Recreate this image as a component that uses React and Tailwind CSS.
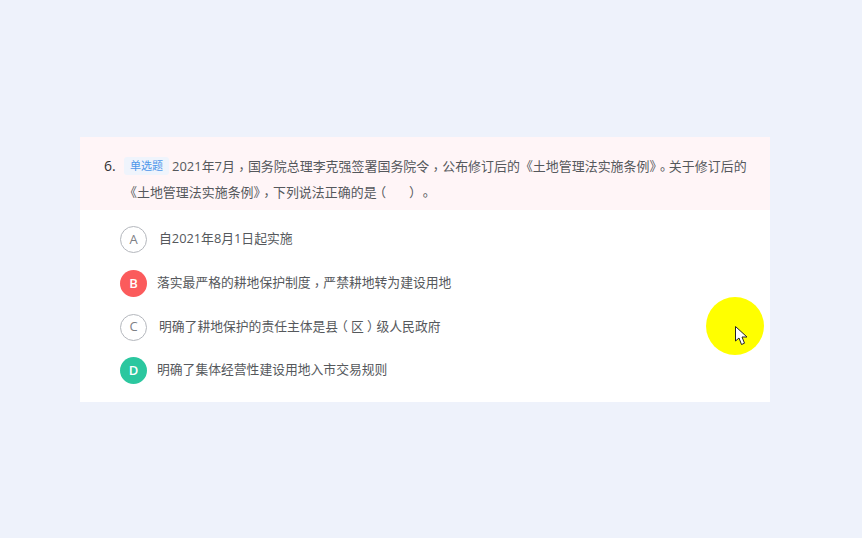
import React from "react";

const options = [
  { letter: "A", text: "自2021年8月1日起实施", state: "idle" },
  { letter: "B", text: "落实最严格的耕地保护制度，严禁耕地转为建设用地", state: "wrong" },
  { letter: "C", text: "明确了耕地保护的责任主体是县（区）级人民政府", state: "idle" },
  { letter: "D", text: "明确了集体经营性建设用地入市交易规则", state: "right" },
];

// punctuation in the screenshot sits centred in its cell, unlike the SC glyphs
const Text = ({ children }) =>
  [...children].map((ch, i) => {
    if (ch === "，" || ch === "。")
      return (
        <span key={i} className="leading-none align-[-3px] font-['Noto_Sans_CJK_TC']">
          {ch}
        </span>
      );
    if (ch === "（" || ch === "）")
      return (
        <span key={i} className="px-[0.25em] [font-feature-settings:'halt']">
          {ch}
        </span>
      );
    return ch;
  });

const Option = ({ letter, text, state }) => {
  const circle =
    state === "wrong"
      ? "bg-[#fb5b5c] text-white font-semibold"
      : state === "right"
      ? "bg-[#2bc79f] text-white font-semibold"
      : "border border-[#b4b7bd] text-[#7d8085] bg-white";

  return (
    <div className="flex items-center h-[43.67px]">
      <div
        className={`w-[27px] h-[27px] rounded-full flex items-center justify-center text-[13px] shrink-0 ${circle}`}
      >
        {letter}
      </div>
      <span className={`text-[12.8px] text-[#55585c] pb-[2px] ${state === "idle" ? "ml-[12px]" : "ml-[10px]"}`}>
        <Text>{text}</Text>
      </span>
    </div>
  );
};

export default function App() {
  return (
    <div
      className="relative h-screen overflow-hidden bg-[#eef2fb] pt-[137px] pl-[80px]"
      style={{ fontFamily: '"Open Sans", "Noto Sans CJK SC", sans-serif' }}
    >
      <div className="w-[690px] bg-white">
        {/* Question */}
        <div className="h-[73px] bg-[#fff5f7] pt-[16px] pl-[24px] pr-[10px] flex">
          <span className="w-[20px] shrink-0 text-[14px] leading-[26px] text-[#333]">6.</span>
          <p className="text-[12.95px] leading-[26px] text-[#55585c]">
            <span className="inline-block h-[18px] leading-[18px] px-[6px] mr-[3px] rounded-[3px] bg-[#eff4fc] text-[#4d96ea] text-[11px] align-[1px]">
              单选题
            </span>
            <Text>2021年7月，国务院总理李克强签署国务院令，公布修订后的《土地管理法实施条例》。关于修订后的</Text>
            <br />
            <Text>《土地管理法实施条例》，下列说法正确的是（　 ）。</Text>
          </p>
        </div>

        {/* Options */}
        <div className="pl-[40px] pt-[8px] pb-[9px]">
          {options.map((o) => (
            <Option key={o.letter} {...o} />
          ))}
        </div>
      </div>

      {/* Cursor highlight */}
      <div className="absolute left-[706px] top-[297px] w-[58px] h-[58px] pl-[28px] pt-[28px] rounded-full bg-[#ffff00]">
        <svg width="16" height="22" viewBox="0 0 16 22">
          <path
            d="M1.5 1.5 L1.5 16 L5 13 L7.5 19.5 L10.5 18.2 L8 12 L13 12 Z"
            fill="#fff"
            stroke="#222"
            strokeWidth="1"
            strokeLinejoin="round"
          />
        </svg>
      </div>
    </div>
  );
}
